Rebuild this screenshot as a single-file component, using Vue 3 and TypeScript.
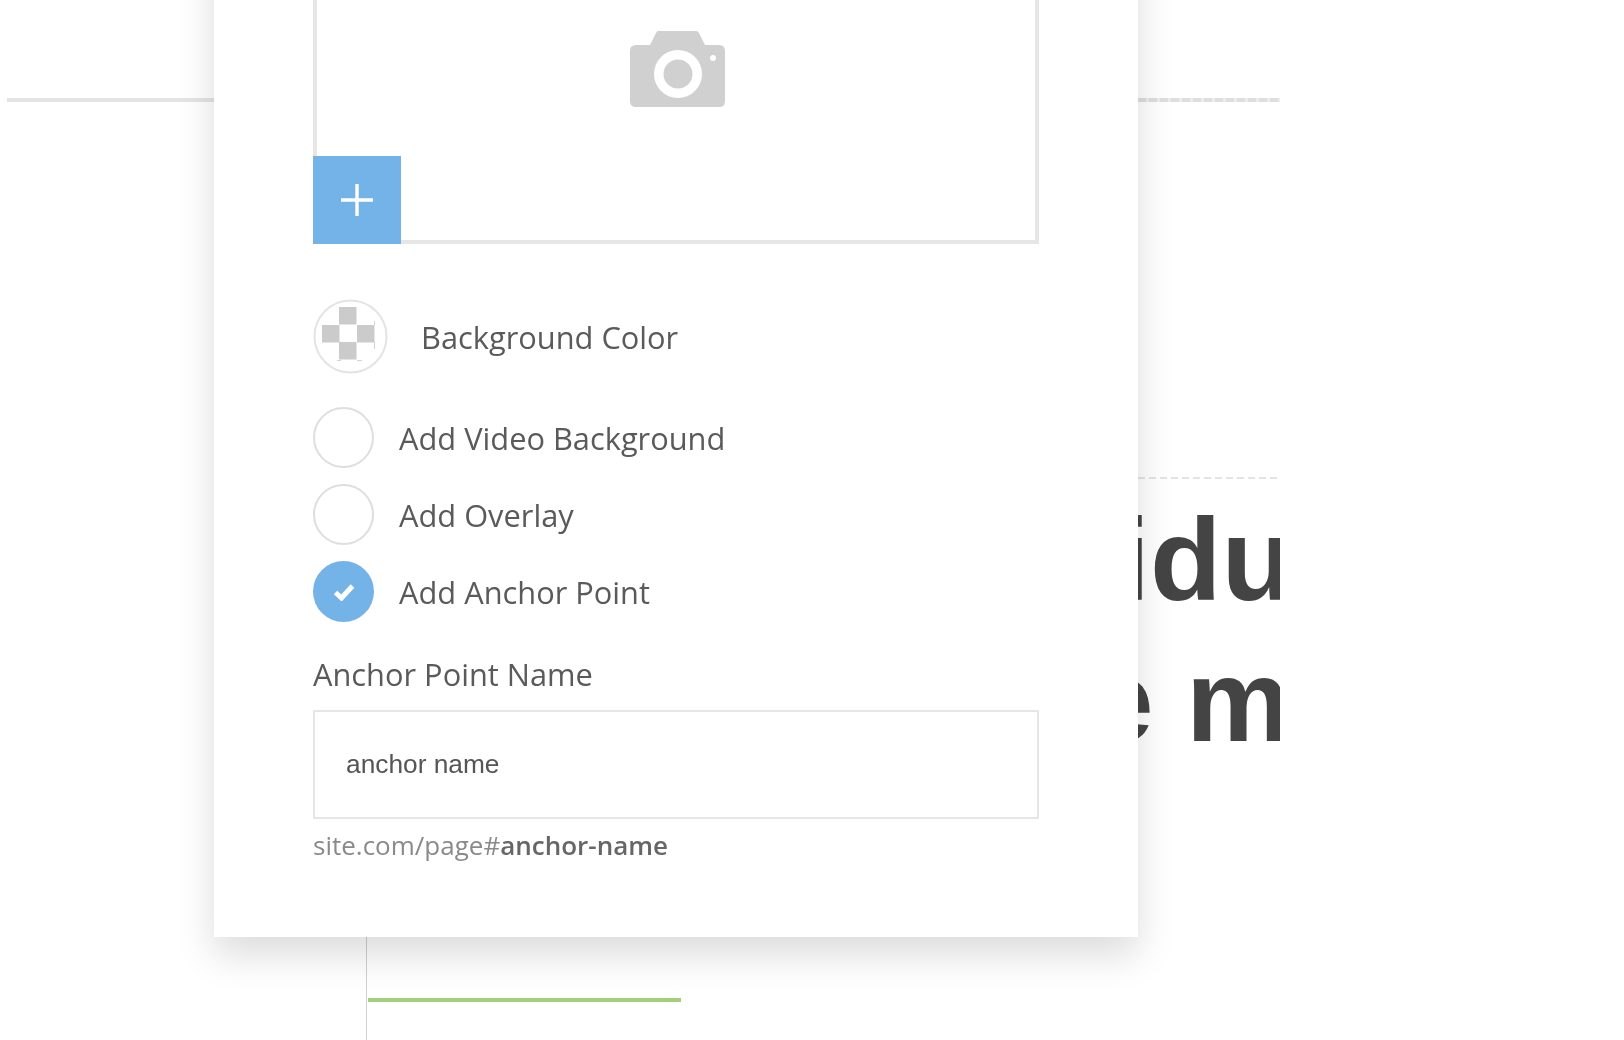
<template>
  <div class="page">
    <div class="stage">
      <div class="rule-row">
        <div class="rule-solid"></div>
        <div class="rule-dashed"></div>
      </div>
      <div class="rule-thin"></div>
      <div class="column">
        <h1 class="headline">
          <span class="line line-one">Our individuals</span>
          <span class="line line-two">We are more</span>
        </h1>
        <div class="accent"></div>
      </div>
    </div>

    <section class="panel">
      <div class="upload">
        <svg class="camera" viewBox="0 0 95 76" aria-hidden="true">
          <path
            d="M28 0H66Q68 0 69 2L75 14H89Q95 14 95 20V70Q95 76 89 76H6Q0 76 0 70V20Q0 14 6 14H20L26 2Q27 0 28 0Z"
            fill="#d0d0d0"
          />
          <circle cx="48" cy="43" r="24" fill="#fff" />
          <circle cx="48" cy="43" r="14.5" fill="#d0d0d0" />
          <circle cx="83" cy="27" r="3" fill="#fff" />
        </svg>
        <button class="add" type="button" aria-label="Add image">
          <svg viewBox="0 0 32 32" aria-hidden="true">
            <path d="M16 0V32M0 16H32" stroke="#fff" stroke-width="3.4" fill="none" />
          </svg>
        </button>
      </div>

      <div class="color-row">
        <svg class="swatch" viewBox="0 0 75 75" aria-hidden="true">
          <circle cx="37.5" cy="37.5" r="36" fill="#fff" stroke="#e4e4e4" stroke-width="2" />
          <rect v-for="(s, i) in squares" :key="i" :x="s[0]" :y="s[1]" width="17.5" height="17.5" fill="#cbcbcb" />
          <path d="M61.5 22V26M61.5 43V50M24 61.5H28M44 61.5H49" stroke="#d4d4d4" stroke-width="1" fill="none" />
        </svg>
        <span class="row-label">Background Color</span>
      </div>

      <div class="options">
        <label v-for="opt in options" :key="opt.label" class="option">
          <span class="tick" :class="{ on: opt.on }">
            <svg v-if="opt.on" viewBox="0 0 22 18" aria-hidden="true">
              <path d="M2.5 9.5L8.5 15L19.5 3" stroke="#fff" stroke-width="5" fill="none" />
            </svg>
          </span>
          <span class="row-label">{{ opt.label }}</span>
        </label>
      </div>

      <label class="field-label" for="anchor">Anchor Point Name</label>
      <input id="anchor" v-model="anchor" class="field" type="text" />
      <p class="hint">site.com/page#<b>anchor-name</b></p>
    </section>
  </div>
</template>

<script setup lang="ts">
import { ref } from 'vue';

const anchor = ref('anchor name');

const squares: [number, number][] = [
  [26, 8],
  [9, 26],
  [44, 26],
  [26, 43]
];

const options = [
  { label: 'Add Video Background', on: false },
  { label: 'Add Overlay', on: false },
  { label: 'Add Anchor Point', on: true }
];
</script>

<style>
html,
body {
  margin: 0;
  background: #fff;
}
</style>

<style scoped>
.page {
  position: relative;
  width: 1624px;
  height: 1040px;
  overflow: hidden;
  background: #fff;
  font-family: "Open Sans", sans-serif;
  color: #555;
  filter: blur(0.45px);
}

.stage {
  display: flex;
  flex-direction: column;
  width: 1280px;
  height: 1040px;
  overflow: hidden;
}

.rule-row {
  display: flex;
  justify-content: space-between;
  margin-top: 98px;
  padding-left: 7px;
}

.rule-solid {
  width: 300px;
  height: 4px;
  background: #e4e4e4;
}

.rule-dashed {
  width: 142px;
  height: 4px;
  background: repeating-linear-gradient(90deg, #dedede 0 8px, #ececec 8px 11px);
}

.rule-thin {
  height: 2px;
  margin: 375px 0 0 1138px;
  background: repeating-linear-gradient(90deg, #e4e4e4 0 7px, #fff 7px 11px);
}

.column {
  flex: 1;
  margin-left: 366px;
  border-left: 1px solid #cfcfd6;
}

.headline {
  margin: 10px 0 0;
  font-family: "Liberation Sans", sans-serif;
  font-size: 117px;
  line-height: 141px;
  font-weight: 700;
  color: #444;
  white-space: nowrap;
}

.line {
  display: block;
}

.line-one {
  margin-left: 237px;
}

.line-two {
  margin-left: 405px;
}

.accent {
  width: 313px;
  height: 4px;
  margin: 227px 0 0 1px;
  background: #a4d07c;
}

.panel {
  position: absolute;
  left: 214px;
  bottom: 103px;
  box-sizing: border-box;
  width: 924px;
  padding: 0 99px 74px;
  background: #fff;
  box-shadow: 0 18px 36px rgba(0, 0, 0, 0.14);
}

.upload {
  position: relative;
  display: flex;
  align-items: center;
  justify-content: center;
  box-sizing: border-box;
  height: 350px;
  border: 4px solid #e6e6e6;
}

.camera {
  width: 95px;
  height: 76px;
  margin-left: 3px;
}

.add {
  position: absolute;
  left: -4px;
  bottom: -4px;
  display: flex;
  align-items: center;
  justify-content: center;
  width: 88px;
  height: 88px;
  padding: 0;
  border: 0;
  background: #74b3e8;
}

.add svg {
  width: 32px;
  height: 32px;
}

.color-row {
  display: flex;
  align-items: center;
  gap: 33px;
  margin-top: 55px;
}

.swatch {
  width: 75px;
  height: 75px;
}

.row-label {
  font-size: 30.8px;
  line-height: 40px;
  color: #5a5a5a;
}

.options {
  display: flex;
  flex-direction: column;
  gap: 16px;
  margin-top: 33px;
}

.option {
  display: flex;
  align-items: center;
  gap: 25px;
}

.tick {
  display: flex;
  align-items: center;
  justify-content: center;
  box-sizing: border-box;
  width: 61px;
  height: 61px;
  border: 2px solid #dedede;
  border-radius: 50%;
}

.tick.on {
  border: 0;
  background: #74b3e8;
}

.tick svg {
  width: 22px;
  height: 18px;
}

.field-label {
  display: block;
  margin-top: 32px;
  font-size: 30.8px;
  line-height: 40px;
  color: #5a5a5a;
}

.field {
  display: block;
  box-sizing: border-box;
  width: 100%;
  height: 109px;
  margin-top: 16px;
  padding: 0 31px;
  border: 2px solid #e6e6e6;
  font-family: "Liberation Sans", sans-serif;
  font-size: 26.3px;
  color: #555;
  outline: none;
}

.hint {
  margin: 8px 0 0;
  font-size: 26px;
  line-height: 36px;
  color: #8a8a8a;
}

.hint b {
  font-weight: 600;
  color: #666;
}
</style>
